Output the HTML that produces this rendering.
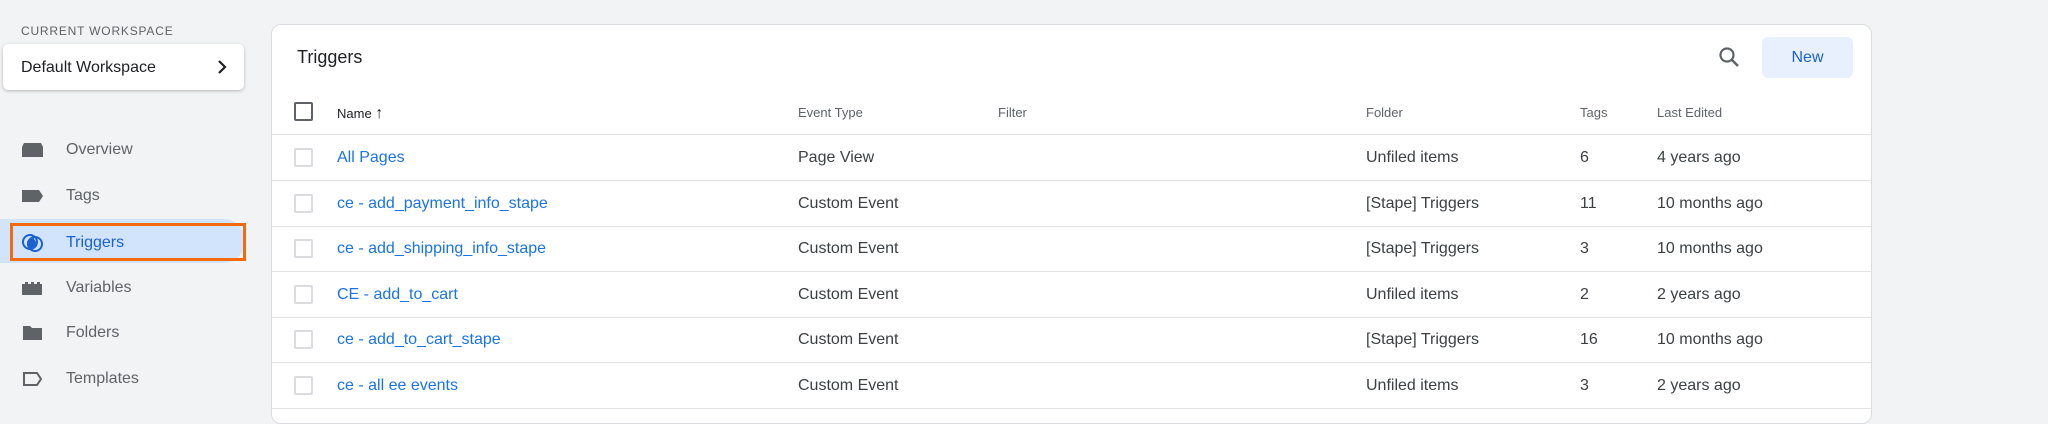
<!DOCTYPE html>
<html><head><meta charset="utf-8"><style>
*{margin:0;padding:0;box-sizing:border-box}
body{width:2048px;height:410px;overflow:hidden;background:#f1f3f4;font-family:"Liberation Sans",Arial,sans-serif;position:relative;color:#3c4043}
.abs{position:absolute}
.cw{left:21px;top:24px;font-size:12px;letter-spacing:.8px;color:#5f6368}
.ws{left:3px;top:44px;width:241px;height:46px;background:#fff;border-radius:5px;box-shadow:0 1px 3px rgba(0,0,0,.25);font-size:16px;color:#202124;padding:15px 0 0 18px}
.ws svg{position:absolute;right:14px;top:15px}
.nav{left:0;width:245px;height:46px;font-size:16px;color:#5f6368}
.nav span{position:absolute;left:66px;top:15px}
.nav svg{position:absolute;left:21px;top:13px}
.sel{background:#d2e3fc;border-radius:0 23px 23px 0}
.sel span{color:#1a62d2}
.box{left:10px;top:223px;width:236px;height:38px;border:3px solid #f36a10}
.card{left:271px;top:24px;width:1601px;height:400px;background:#fff;border:1px solid #dadce0;border-radius:10px}
.title{left:297px;top:47px;font-size:18px;color:#202124}
.new{left:1762px;top:37px;width:91px;height:41px;background:#e8f0fe;border-radius:6px;color:#1a62d2;font-size:16px;text-align:center;line-height:41px}
.row{left:272px;width:1599px;height:46px;border-bottom:1px solid #e3e3e3;font-size:16px;color:#3c4043}
.row div{position:absolute;top:14px;white-space:nowrap}
.hd{font-size:13px;color:#5f6368}
.hd div{top:16px}
.cb{left:22px;width:19px;height:19px;border:2px solid #dadce0;border-radius:2px;top:13px!important}
.nm{left:65px;color:#1a73e8}
</style></head><body>
<div class="abs cw">CURRENT WORKSPACE</div>
<div class="abs ws">Default Workspace<svg width="14" height="16" viewBox="0 0 14 16"><path d="M3 2l6 6-6 6" fill="none" stroke="#202124" stroke-width="2.2"/></svg></div>

<div class="abs nav" style="top:126px"><svg width="23" height="22" viewBox="0 0 23 22"><path d="M3 4h17l2 4v10H1V8z" fill="#5f6368"/></svg><span>Overview</span></div>
<div class="abs nav" style="top:172px"><svg width="23" height="22" viewBox="0 0 23 22"><path d="M1 5h17l4 6-4 6H1z" fill="#5f6368"/></svg><span>Tags</span></div>
<div class="abs nav sel" style="top:219px;height:44px"><svg width="23" height="22" viewBox="0 0 23 22"><circle cx="9" cy="10" r="7" fill="none" stroke="#1a62d2" stroke-width="2"/><circle cx="14" cy="12" r="7" fill="none" stroke="#1a62d2" stroke-width="2"/><path d="M12 5.5a7 7 0 0 1-3 11.5a7 7 0 0 1 3-11.5z" fill="#1a62d2"/><circle cx="10.5" cy="11" r="4.5" fill="#1a62d2"/></svg><span>Triggers</span></div>
<div class="abs box"></div>
<div class="abs nav" style="top:264px"><svg width="23" height="22" viewBox="0 0 23 22"><path d="M1 7h3V5h3v2h3V5h3v2h3V5h3v2h2v11H1z" fill="#5f6368"/></svg><span>Variables</span></div>
<div class="abs nav" style="top:309px"><svg width="23" height="22" viewBox="0 0 23 22"><path d="M2 4h7l2 2h10v12H2z" fill="#5f6368"/></svg><span>Folders</span></div>
<div class="abs nav" style="top:355px"><svg width="23" height="22" viewBox="0 0 23 22"><path d="M3 5h13l4 6-4 6H3z" fill="none" stroke="#5f6368" stroke-width="2"/></svg><span>Templates</span></div>

<div class="abs card"></div>
<div class="abs title">Triggers</div>
<svg class="abs" style="left:1717px;top:45px" width="24" height="24" viewBox="0 0 24 24"><circle cx="10" cy="10" r="6.5" fill="none" stroke="#5f6368" stroke-width="2.2"/><path d="M15 15l6 6" stroke="#5f6368" stroke-width="2.5"/></svg>
<div class="abs new">New</div>

<div class="abs row hd" style="top:89px"><div class="cb" style="border-color:#5f6368"></div><div style="left:65px;color:#202124">Name <span style="font-size:16px">↑</span></div><div style="left:526px">Event Type</div><div style="left:726px">Filter</div><div style="left:1094px">Folder</div><div style="left:1308px">Tags</div><div style="left:1385px">Last Edited</div></div>
<div class="abs row" style="top:135px"><div class="cb"></div><div class="nm">All Pages</div><div style="left:526px">Page View</div><div style="left:1094px">Unfiled items</div><div style="left:1308px">6</div><div style="left:1385px">4 years ago</div></div>
<div class="abs row" style="top:181px"><div class="cb"></div><div class="nm">ce - add_payment_info_stape</div><div style="left:526px">Custom Event</div><div style="left:1094px">[Stape] Triggers</div><div style="left:1308px">11</div><div style="left:1385px">10 months ago</div></div>
<div class="abs row" style="top:226px"><div class="cb"></div><div class="nm">ce - add_shipping_info_stape</div><div style="left:526px">Custom Event</div><div style="left:1094px">[Stape] Triggers</div><div style="left:1308px">3</div><div style="left:1385px">10 months ago</div></div>
<div class="abs row" style="top:272px"><div class="cb"></div><div class="nm">CE - add_to_cart</div><div style="left:526px">Custom Event</div><div style="left:1094px">Unfiled items</div><div style="left:1308px">2</div><div style="left:1385px">2 years ago</div></div>
<div class="abs row" style="top:317px"><div class="cb"></div><div class="nm">ce - add_to_cart_stape</div><div style="left:526px">Custom Event</div><div style="left:1094px">[Stape] Triggers</div><div style="left:1308px">16</div><div style="left:1385px">10 months ago</div></div>
<div class="abs row" style="top:363px"><div class="cb"></div><div class="nm">ce - all ee events</div><div style="left:526px">Custom Event</div><div style="left:1094px">Unfiled items</div><div style="left:1308px">3</div><div style="left:1385px">2 years ago</div></div>
</body></html>
